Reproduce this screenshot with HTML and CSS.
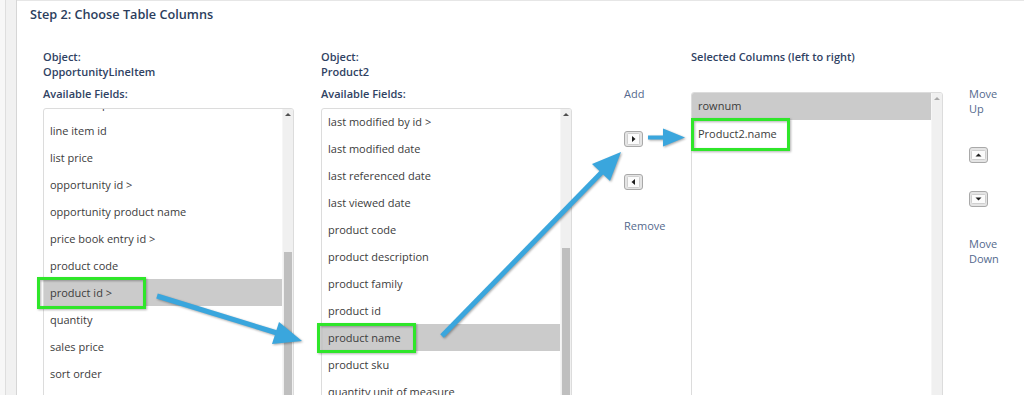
FILE: index.html
```
<!DOCTYPE html>
<html>
<head>
<meta charset="utf-8">
<title>Step 2: Choose Table Columns</title>
<link rel="stylesheet" href="styles.css">
</head>
<body>
<div class="page">
  <div class="gutter"></div>
  <div class="rail"></div>
  <main class="panel">
    <h2 class="title">Step 2: Choose Table Columns</h2>
    <div class="columns">
      <section class="picker">
        <div class="label">Object:</div>
        <div class="label">OpportunityLineItem</div>
        <div class="label fields">Available Fields:</div>
        <div class="listbox">
          <ul class="items items-left">
            <li>line description</li>
            <li>line item id</li>
            <li>list price</li>
            <li>opportunity id &gt;</li>
            <li>opportunity product name</li>
            <li>price book entry id &gt;</li>
            <li>product code</li>
            <li class="selected">product id &gt;</li>
            <li>quantity</li>
            <li>sales price</li>
            <li>sort order</li>
            <li>subtotal</li>
          </ul>
          <div class="scrollbar">
            <span class="up"></span>
            <div class="track-left"></div>
            <div class="thumb"></div>
          </div>
        </div>
      </section>

      <section class="picker picker-mid">
        <div class="label">Object:</div>
        <div class="label">Product2</div>
        <div class="label fields">Available Fields:</div>
        <div class="listbox">
          <ul class="items items-mid">
            <li>last modified by id &gt;</li>
            <li>last modified date</li>
            <li>last referenced date</li>
            <li>last viewed date</li>
            <li>product code</li>
            <li>product description</li>
            <li>product family</li>
            <li>product id</li>
            <li class="selected">product name</li>
            <li>product sku</li>
            <li>quantity unit of measure</li>
          </ul>
          <div class="scrollbar">
            <span class="up"></span>
            <div class="track-mid"></div>
            <div class="thumb"></div>
          </div>
        </div>
      </section>

      <section class="mover mover-add">
        <a class="link">Add</a>
        <button class="arrow-btn btn-add" aria-label="Add">
          <svg width="19" height="16" viewBox="0 0 19 16"><rect x="0.5" y="0.5" width="18" height="15" rx="2.5" fill="#e4e4e4" stroke="#a9a9a9"/><rect x="3.5" y="2.5" width="12" height="11" rx="1" fill="#fbfbfb" stroke="#cfcfcf"/><path d="M8 5 L11.5 8 L8 11 Z" fill="#1e1e1e"/></svg>
        </button>
        <button class="arrow-btn btn-remove" aria-label="Remove">
          <svg width="19" height="16" viewBox="0 0 19 16"><rect x="0.5" y="0.5" width="18" height="15" rx="2.5" fill="#e4e4e4" stroke="#a9a9a9"/><rect x="3.5" y="2.5" width="12" height="11" rx="1" fill="#fbfbfb" stroke="#cfcfcf"/><path d="M11 5 L7.5 8 L11 11 Z" fill="#1e1e1e"/></svg>
        </button>
        <a class="link link-remove">Remove</a>
      </section>

      <section class="picker picker-right">
        <div class="label">Selected Columns (left to right)</div>
        <div class="listbox listbox-right">
          <ul class="items items-right">
            <li class="selected">rownum</li>
            <li>Product2.name</li>
          </ul>
          <div class="scrollbar scrollbar-empty">
            <span class="up"></span>
          </div>
        </div>
      </section>

      <section class="mover mover-order">
        <a class="link">Move<br>Up</a>
        <button class="arrow-btn btn-up" aria-label="Move Up">
          <svg width="19" height="16" viewBox="0 0 19 16"><rect x="0.5" y="0.5" width="18" height="15" rx="2.5" fill="#e4e4e4" stroke="#a9a9a9"/><rect x="2.5" y="3.5" width="14" height="9" rx="1" fill="#fbfbfb" stroke="#cfcfcf"/><path d="M6.5 9.5 L9.5 6.5 L12.5 9.5 Z" fill="#1e1e1e"/></svg>
        </button>
        <button class="arrow-btn btn-down" aria-label="Move Down">
          <svg width="19" height="16" viewBox="0 0 19 16"><rect x="0.5" y="0.5" width="18" height="15" rx="2.5" fill="#e4e4e4" stroke="#a9a9a9"/><rect x="2.5" y="3.5" width="14" height="9" rx="1" fill="#fbfbfb" stroke="#cfcfcf"/><path d="M6.5 6.5 L9.5 9.5 L12.5 6.5 Z" fill="#1e1e1e"/></svg>
        </button>
        <a class="link link-down">Move<br>Down</a>
      </section>
    </div>
  </main>

  <svg class="annotations" width="1024" height="395" viewBox="0 0 1024 395">
    <g class="boxes" fill="none" stroke="#2fe62a" stroke-width="3">
      <rect x="38.5" y="278.5" width="106" height="29"/>
      <rect x="318.5" y="324.5" width="96" height="27"/>
      <rect x="692.5" y="119.5" width="96" height="30"/>
    </g>
    <g class="arrows" fill="#3aa6dd" stroke="#3aa6dd">
      <line x1="157" y1="296" x2="277" y2="333" stroke-width="5"/>
      <polygon points="302,341 272,344 279,322" stroke="none"/>
      <line x1="442" y1="336" x2="603" y2="171" stroke-width="5"/>
      <polygon points="621,152 610,181 592,164" stroke="none"/>
      <line x1="648" y1="137.5" x2="666" y2="137.5" stroke-width="4"/>
      <polygon points="685,137.5 663,128.5 663,146.5" stroke="none"/>
    </g>
  </svg>
</div>
</body>
</html>
```

FILE: styles.css
```
* {
  box-sizing: border-box;
}

html, body {
  margin: 0;
  padding: 0;
  height: 395px;
  overflow: hidden;
  background: #ffffff;
}

body {
  font-family: "Open Sans", "Noto Sans", "Liberation Sans", sans-serif;
  color: #3c3c3c;
}

.page {
  position: relative;
  display: flex;
  width: 1024px;
  height: 395px;
  overflow: hidden;
}

.gutter {
  width: 5px;
  background: #f7f7f7;
  flex: none;
}

.rail {
  width: 12px;
  flex: none;
  background: #f1f1f1;
  border-left: 1px solid #dedede;
  border-right: 1px solid #d6d6d6;
}

.panel {
  flex: 1;
  border-top: 1px solid #e6e6e6;
  padding-left: 13px;
  min-width: 0;
}

.title {
  margin: 4px 0 0 0;
  font-size: 12.7px;
  line-height: 18px;
  font-weight: 600;
  color: #2b3d5c;
}

.columns {
  display: flex;
  align-items: flex-start;
  padding-left: 13px;
  margin-top: 26px;
}

.picker {
  width: 251px;
  flex: none;
}

.picker-mid {
  margin-left: 27px;
}

.picker-right {
  width: 252px;
}

.label {
  font-size: 11px;
  line-height: 15px;
  font-weight: 600;
  color: #2f4263;
}

.fields {
  margin-top: 7px;
}

.listbox {
  display: flex;
  margin-top: 7px;
  height: 320px;
  border: 1px solid #dcdcdc;
  border-radius: 3px;
  overflow: hidden;
}

.listbox-right {
  margin-top: 28px;
}

.items {
  list-style: none;
  margin: 0;
  padding: 0;
  flex: 1;
  min-width: 0;
}

.items-left {
  margin-top: -19px;
}

.items-mid {
  margin-top: -1px;
}

.items-right li.selected {
  line-height: 25px;
}

.items li {
  height: 27px;
  line-height: 27px;
  padding-left: 6px;
  font-size: 11px;
  white-space: nowrap;
  color: #3c3c3c;
}

.items li.selected {
  background: #cbcbcb;
}

.scrollbar {
  width: 11px;
  flex: none;
  display: flex;
  flex-direction: column;
  background: #f0f0f0;
  border-left: 1px solid #f6f6f6;
}

.up {
  display: block;
  width: 0;
  height: 0;
  margin: 4px auto 0 auto;
  border-left: 3px solid transparent;
  border-right: 3px solid transparent;
  border-bottom: 3px solid #505050;
}

.scrollbar-empty .up {
  border-bottom-color: #a8a8a8;
}

.track-left {
  height: 136px;
  flex: none;
}

.track-mid {
  height: 132px;
  flex: none;
}

.thumb {
  flex: 1;
  margin: 0 1px;
  background: #bfbfbf;
}

.mover {
  display: flex;
  flex-direction: column;
  align-items: flex-start;
  flex: none;
  padding-top: 37px;
}

.mover-add {
  margin-left: 52px;
  width: 67px;
}

.mover-order {
  margin-left: 26px;
}

.link {
  font-size: 11px;
  line-height: 15px;
  color: #54698d;
  cursor: pointer;
}

.arrow-btn {
  display: block;
  padding: 0;
  margin: 0;
  border: none;
  background: none;
  width: 19px;
  height: 16px;
  line-height: 0;
}

.btn-add {
  margin-top: 30px;
}

.btn-remove {
  margin-top: 27px;
}

.link-remove {
  margin-top: 28px;
}

.btn-up {
  margin-top: 31px;
}

.btn-down {
  margin-top: 28px;
}

.link-down {
  margin-top: 29px;
}

.annotations {
  position: absolute;
  left: 0;
  top: 0;
  pointer-events: none;
}

.arrows {
  filter: drop-shadow(1px 1px 0.8px rgba(0, 0, 0, 0.35));
}

.boxes {
  filter: drop-shadow(1px 1px 0.8px rgba(0, 0, 0, 0.3));
}
```
